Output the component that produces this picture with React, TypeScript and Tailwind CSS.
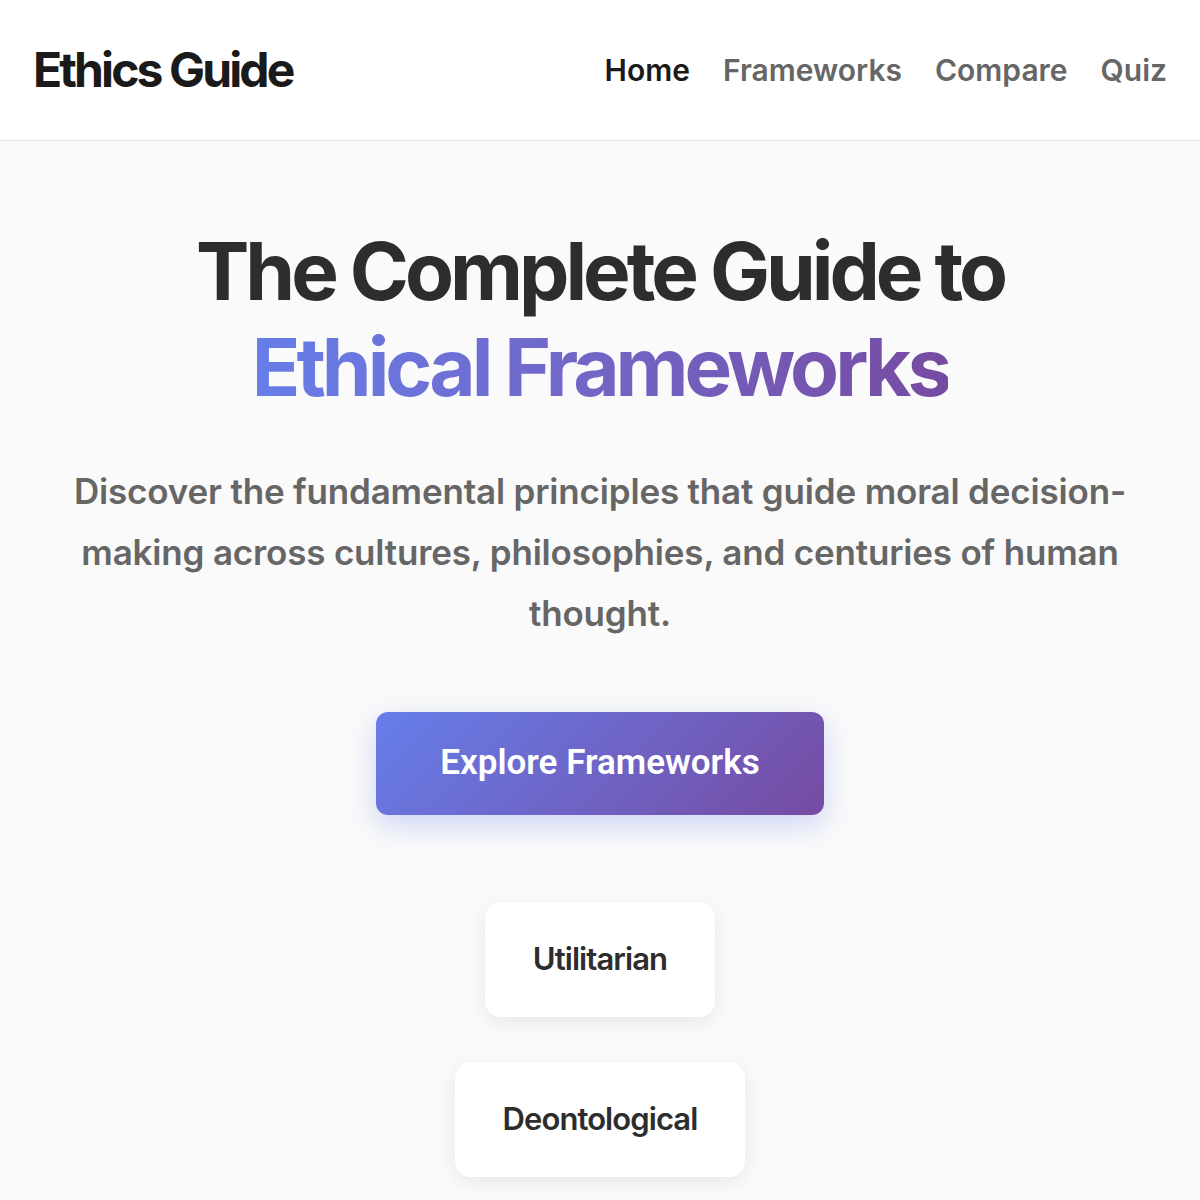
import React from "react";

const sans = { fontFamily: "Inter, 'Noto Sans', sans-serif" };

function Header() {
  const links = ["Home", "Frameworks", "Compare", "Quiz"];
  return (
    <header className="flex h-[141px] items-center justify-between border-b border-[#e5e5e5] bg-white px-[33px]">
      <div className="text-[48px] font-bold leading-none tracking-[-0.06em] text-[#1a1a1a]">
        Ethics Guide
      </div>
      <nav className="flex items-center gap-[33px]">
        {links.map((l, i) => (
          <a
            key={l}
            className={`text-[30px] font-semibold leading-none tracking-[0em] ${
              i === 0 ? "text-[#1a1a1a]" : "text-[#666666]"
            }`}
          >
            {l}
          </a>
        ))}
      </nav>
    </header>
  );
}

function Hero() {
  const kinds = ["Utilitarian", "Deontological"];
  return (
    <section className="flex flex-col items-center bg-[#fafafa] px-[50px] pt-[82px] pb-[40px] text-center">
      <h1 className="text-[80px] font-bold leading-[96px] tracking-[-0.05em] text-[#2d2d2d]">
        The Complete Guide to
        <br />
        <span className="bg-gradient-to-r from-[#667eea] to-[#764ba2] bg-clip-text text-transparent">
          Ethical Frameworks
        </span>
      </h1>
      <p className="mt-[46px] max-w-[1100px] text-[35px] font-semibold leading-[61px] tracking-[-0.005em] text-[#666666]">
        Discover the fundamental principles that guide moral decision-making across cultures,
        philosophies, and centuries of human thought.
      </p>
      <button
        className="mt-[68px] h-[103px] w-[448px] rounded-[12px] bg-[linear-gradient(135deg,#667eea_0%,#764ba2_100%)] text-[35px] font-semibold text-white shadow-[0_10px_30px_rgba(102,126,234,0.3)]"
        style={{ fontFamily: "Roboto, sans-serif" }}
      >
        Explore Frameworks
      </button>
      <div className="mt-[87px] flex flex-col items-center gap-[45px]">
        {kinds.map((k) => (
          <div
            key={k}
            className="flex h-[115px] items-center rounded-[16px] bg-white px-[48px] text-[31px] font-semibold tracking-[-0.03em] text-[#2d2d2d] shadow-[0_5px_20px_rgba(0,0,0,0.08)]"
          >
            {k}
          </div>
        ))}
      </div>
    </section>
  );
}

export default function App() {
  return (
    <div className="min-h-[1200px] bg-[#fafafa]" style={sans}>
      <Header />
      <Hero />
    </div>
  );
}
